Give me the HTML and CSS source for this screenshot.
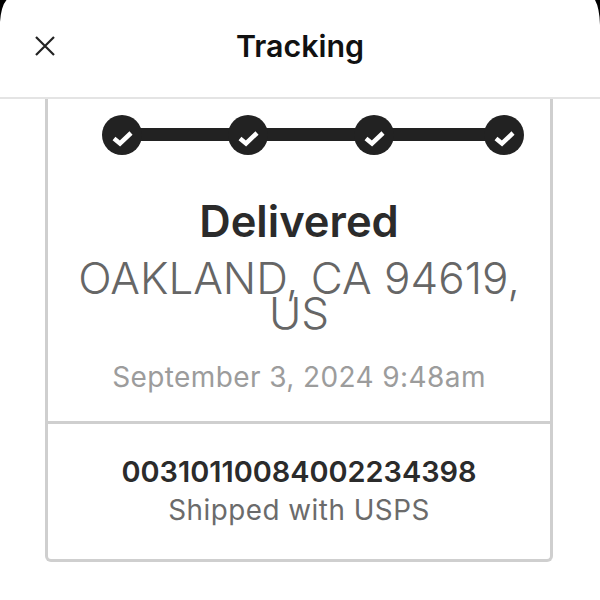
FILE: index.html
```html
<!DOCTYPE html>
<html lang="en">
<head>
<meta charset="utf-8">
<title>Tracking</title>
<link rel="stylesheet" href="styles.css">
</head>
<body>
<div class="screen">
  <svg class="corner corner-left" viewBox="0 0 8 24" width="8" height="24" aria-hidden="true"><path d="M0 0H6.500Q1.200 6 0 22Z"/></svg>
  <svg class="corner corner-right" viewBox="0 0 8 26" width="8" height="26" aria-hidden="true"><path d="M3 0H8V25Q7.500 8 3 0Z"/></svg>
  <header class="header">
    <svg class="close" viewBox="0 0 20 20" width="20" height="20" aria-hidden="true"><path d="M1 1 19 19M19 1 1 19"/></svg>
    <h1 class="title">Tracking</h1>
  </header>
  <section class="card">
    <div class="status">
      <div class="stepper">
        <span class="step"><svg viewBox="0 0 40 40" width="40" height="40"><circle cx="20" cy="20" r="20"/><path d="M12 23.500 18 28.500 29 18"/></svg></span>
        <span class="step"><svg viewBox="0 0 40 40" width="40" height="40"><circle cx="20" cy="20" r="20"/><path d="M12 23.500 18 28.500 29 18"/></svg></span>
        <span class="step"><svg viewBox="0 0 40 40" width="40" height="40"><circle cx="20" cy="20" r="20"/><path d="M12 23.500 18 28.500 29 18"/></svg></span>
        <span class="step step-last"><svg viewBox="0 0 40 40" width="40" height="40"><circle cx="20" cy="20" r="20"/><path d="M12 23.500 18 28.500 29 18"/></svg></span>
      </div>
      <h2 class="state">Delivered</h2>
      <p class="place">OAKLAND, CA 94619, US</p>
      <p class="date">September 3, 2024 9:48am</p>
    </div>
    <div class="shipment">
      <p class="number">00310110084002234398</p>
      <p class="carrier">Shipped with USPS</p>
    </div>
  </section>
</div>
</body>
</html>
```
FILE: styles.css
```css
* { box-sizing: border-box; margin: 0; padding: 0; }
html, body { width: 600px; height: 600px; overflow: hidden; background: #fff; }
body { font-family: Inter, "Liberation Sans", sans-serif; }
.screen { position: relative; width: 600px; height: 600px; display: flex; flex-direction: column; background: #fff; }
.corner { position: absolute; top: 0; fill: #000; }
.corner-left { left: 0; }
.corner-right { right: 0; }
.header { position: relative; height: 99px; flex: none; display: flex; align-items: center; justify-content: center; border-bottom: 2px solid #e4e4e4; padding-bottom: 6px; }
.close { position: absolute; left: 35px; top: 36px; fill: none; stroke: #222; stroke-width: 2.2; }
.title { font-size: 30.4px; font-weight: 600; color: #111; }
.card { margin: 0 47px 0 45px; height: 463px; border: 3px solid #cfcfcf; border-top: 0; border-radius: 0 0 6px 6px; display: flex; flex-direction: column; }
.status { height: 325px; flex: none; border-bottom: 3px solid #cfcfcf; padding-top: 16px; display: flex; flex-direction: column; align-items: center; }
.stepper { width: 422px; height: 40px; align-self: flex-start; margin-left: 54px; display: flex; gap: 86px; background: linear-gradient(#222, #222) 20px 13px / 382px 13px no-repeat; }
.step { width: 40px; height: 40px; display: block; }
.step-last { margin-left: 4px; }
.step svg { display: block; fill: #222; }
.step path { fill: none; stroke: #fff; stroke-width: 4.500; }
.state { font-size: 43.500px; font-weight: 600; color: #2b2b2b; line-height: 48px; margin-top: 42px; }
.place { font-size: 44px; font-weight: 300; color: #666; line-height: 35px; text-align: center; margin-top: 16px; width: 470px; }
.date { font-size: 28px; color: #9c9c9c; line-height: 34px; margin-top: 29px; letter-spacing: 0.400px; }
.shipment { display: flex; flex-direction: column; align-items: center; padding-top: 31px; }
.number { font-size: 28.900px; font-weight: 600; color: #2b2b2b; line-height: 34px; }
.carrier { font-size: 27.800px; color: #6b6b6b; line-height: 36px; letter-spacing: 0.500px; margin-top: 3px; }
```
